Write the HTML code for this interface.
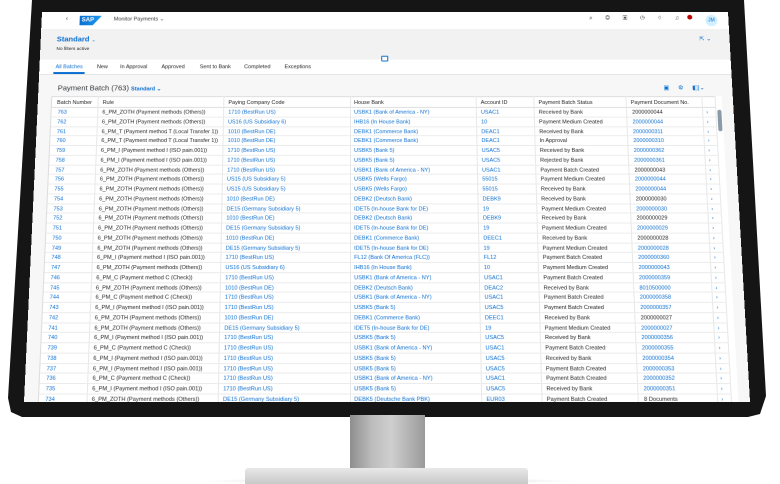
<!DOCTYPE html>
<html><head><meta charset="utf-8"><style>
*{margin:0;padding:0;box-sizing:border-box}
html,body{width:780px;height:484px;overflow:hidden;background:#fff;font-family:"Liberation Sans",sans-serif}
#bezel{position:absolute;left:0;top:0;width:780px;height:420px;background:#151515;clip-path:polygon(32px 0,744px 0,766px 396px,760px 414px,748px 417px,22px 417px,11px 412px,8px 398px)}
#neck{position:absolute;left:350px;top:415px;width:75px;height:55px;background:linear-gradient(90deg,#8e8e8e,#bdbdbd 30%,#cfcfcf 55%,#9a9a9a)}
#base{position:absolute;left:245px;top:468px;width:283px;height:16px;background:linear-gradient(#e8e8e8,#c8c8c8);border-radius:3px 3px 0 0}
#shadow{position:absolute;left:200px;top:478px;width:380px;height:6px;background:radial-gradient(ellipse at center,#cfcfcf,#fff 70%)}
#scr{position:absolute;left:42px;top:12px;width:686px;height:390px;overflow:hidden;background:#f7f7f7;transform-origin:0 0;transform:matrix3d(1,0,0,0,-0.04361,0.9449,0,-0.0001413,0,0,1,0,0,0,0,1);font-size:5.4px;color:#222}
.a{position:absolute;white-space:nowrap}
.l{color:#0a6ed1}
#shell{position:absolute;left:0;top:0;width:686px;height:18px;background:#fff}
#hdr{position:absolute;left:0;top:18px;width:686px;height:32px;background:#f2f2f2}
#tabs{position:absolute;left:0;top:50px;width:686px;height:16px;background:#fff;border-bottom:1px solid #e5e5e5}
#tbl{position:absolute;left:13px;top:88px;width:662px;height:310px;background:#fff;border-left:1px solid #ddd}
.row{position:absolute;left:0;width:655px;height:9.75px;border-bottom:1px solid #ececec}
.c{position:absolute;top:2px;white-space:nowrap}
.vl{position:absolute;top:0;width:1px;height:310px;background:#e8e8e8}
</style></head><body>
<div id="bezel"></div>
<div id="neck"></div>
<div id="shadow"></div>
<div id="base"></div>
<div id="scr">
 <div id="shell">
  <div class="a" style="left:24px;top:4px;font-size:7px;color:#555">‹</div>
  <div class="a" style="left:38px;top:4px;width:22px;height:10px;background:linear-gradient(90deg,#0a6ed1,#1c9bf0);clip-path:polygon(0 0,100% 0,60% 100%,0 100%);color:#fff;font-weight:bold;font-size:6px;padding:2px 0 0 2px">SAP</div>
  <div class="a" style="left:72px;top:5px;font-size:5.5px;color:#333">Monitor Payments ⌄</div>
  <div class="a" style="left:547px;top:4px;font-size:6px;color:#444;word-spacing:11px">⌕ ◎ ▣ ◷ ♢ ♫</div>
  <div class="a" style="left:645px;top:3px;width:5px;height:5px;border-radius:50%;background:#b00"></div>
  <div class="a" style="left:663px;top:3px;width:12px;height:12px;border-radius:50%;background:#d1efff;color:#0a6ed1;font-size:5px;text-align:center;line-height:12px">JM</div>
 </div>
 <div id="hdr">
  <div class="a l" style="left:16px;top:6px;font-size:7.5px;font-weight:bold">Standard <span style="font-weight:normal;font-size:5px">⌄</span></div>
  <div class="a" style="left:16px;top:19px;font-size:4.8px">No filters active</div>
  <div class="a l" style="left:656px;top:7px;font-size:6px">⇱ ⌄</div>
 </div>
 <div id="tabs">
  <div class="a l" style="left:16px;top:5px">All Batches</div>
  <div class="a" style="left:14px;top:13px;width:31px;height:2px;background:#0a6ed1"></div>
  <div class="a" style="left:57px;top:5px">New</div>
  <div class="a" style="left:80px;top:5px">In Approval</div>
  <div class="a" style="left:121px;top:5px">Approved</div>
  <div class="a" style="left:159px;top:5px">Sent to Bank</div>
  <div class="a" style="left:203px;top:5px">Completed</div>
  <div class="a" style="left:243px;top:5px">Exceptions</div>
 </div>
 <div class="a" style="left:339px;top:46px;width:7px;height:6px;border:1px solid #0a6ed1;border-radius:1px;background:#fff"></div>
 <div class="a" style="left:19px;top:75px;font-size:7.5px;color:#32363a">Payment Batch (763) <span class="l" style="font-size:5.5px;font-weight:bold">Standard ⌄</span></div>
 <div class="a l" style="left:618px;top:76px;font-size:6px;word-spacing:7px">▣ ⚙ ◧|⌄</div>
 <div id="tbl">
  <div class="row" style="top:0;height:12px;border-top:1px solid #ddd;border-bottom:1px solid #ddd"><span class="c" style="left:5px;top:3px">Batch Number</span><span class="c" style="left:50px;top:3px">Rule</span><span class="c" style="left:174px;top:3px">Paying Company Code</span><span class="c" style="left:298px;top:3px">House Bank</span><span class="c" style="left:423px;top:3px">Account ID</span><span class="c" style="left:480px;top:3px">Payment Batch Status</span><span class="c" style="left:571px;top:3px">Payment Document No.</span></div>
  <div class="vl" style="left:45px"></div><div class="vl" style="left:169px"></div><div class="vl" style="left:294px"></div><div class="vl" style="left:418px"></div><div class="vl" style="left:475px"></div><div class="vl" style="left:566px"></div><div class="vl" style="left:641px"></div><div class="vl" style="left:654px"></div>
  <div class="a" style="left:656px;top:14px;width:4px;height:22px;background:#8a9aa8;border-radius:2px"></div>
  <div id="rows"></div>
 </div>
</div>
<script>
var Z="6_PM_ZOTH (Payment methods (Others))",T="6_PM_T (Payment method T (Local Transfer 1))",I="6_PM_I (Payment method I (ISO pain.001))",C="6_PM_C (Payment method C (Check))";
var B1="1710 (BestRun US)",D1="1010 (BestRun DE)",U6="US16 (US Subsidiary 6)",U5="US15 (US Subsidiary 5)",DE="DE15 (Germany Subsidiary 5)";
var H1="USBK1 (Bank of America - NY)",H5="USBK5 (Bank 5)",CB="DEBK1 (Commerce Bank)",DB="DEBK2 (Deutsch Bank)",IH="IHB16 (In House Bank)",ID="IDET5 (In-house Bank for DE)",WF="USBK5 (Wells Fargo)";
var R="Received by Bank",M="Payment Medium Created",P="Payment Batch Created";
var d=[[763,Z,B1,H1,"USAC1",R,"2000000044",0],[762,Z,U6,IH,"10",M,"2000000044",1],[761,T,D1,CB,"DEAC1",R,"2000000311",1],[760,T,D1,CB,"DEAC1","In Approval","2000000310",1],[759,I,B1,H5,"USAC5",R,"2000000362",1],[758,I,B1,H5,"USAC5","Rejected by Bank","2000000361",1],[757,Z,B1,H1,"USAC1",P,"2000000043",0],[756,Z,U5,WF,"55015",M,"2000000044",1],[755,Z,U5,WF,"55015",R,"2000000044",1],[754,Z,D1,DB,"DEBK9",R,"2000000030",0],[753,Z,DE,ID,"19",M,"2000000030",1],[752,Z,D1,DB,"DEBK9",R,"2000000029",0],[751,Z,DE,ID,"19",M,"2000000029",1],[750,Z,D1,CB,"DEEC1",R,"2000000028",0],[749,Z,DE,ID,"19",M,"2000000028",1],[748,I,B1,"FL12 (Bank Of America (FLC))","FL12",P,"2000000360",1],[747,Z,U6,IH,"10",M,"2000000043",1],[746,C,B1,H1,"USAC1",P,"2000000359",1],[745,Z,D1,DB,"DEAC2",R,"8010500000",1],[744,C,B1,H1,"USAC1",P,"2000000358",1],[743,I,B1,H5,"USAC5",P,"2000000357",1],[742,Z,D1,CB,"DEEC1",R,"2000000027",0],[741,Z,DE,ID,"19",M,"2000000027",1],[740,I,B1,H5,"USAC5",R,"2000000356",1],[739,C,B1,H1,"USAC1",P,"2000000355",1],[738,I,B1,H5,"USAC5",R,"2000000354",1],[737,I,B1,H5,"USAC5",P,"2000000353",1],[736,C,B1,H1,"USAC1",P,"2000000352",1],[735,I,B1,H5,"USAC5",R,"2000000351",1],[734,Z,DE,"DEBK5 (Deutsche Bank PBK)","EUR03",P,"8 Documents",0]];
var h="";d.forEach(function(r,i){var y=12+i*9.75;h+='<div class="row" style="top:'+y+'px"><span class="c l" style="left:6px">'+r[0]+'</span><span class="c" style="left:50px">'+r[1]+'</span><span class="c l" style="left:174px">'+r[2]+'</span><span class="c l" style="left:298px">'+r[3]+'</span><span class="c l" style="left:423px">'+r[4]+'</span><span class="c" style="left:480px">'+r[5]+'</span><span class="c'+(r[7]?' l':'')+'" style="left:572px">'+r[6]+'</span><span class="c l" style="left:645px">›</span></div>'});
document.getElementById("rows").innerHTML=h;
</script>
</body></html>
